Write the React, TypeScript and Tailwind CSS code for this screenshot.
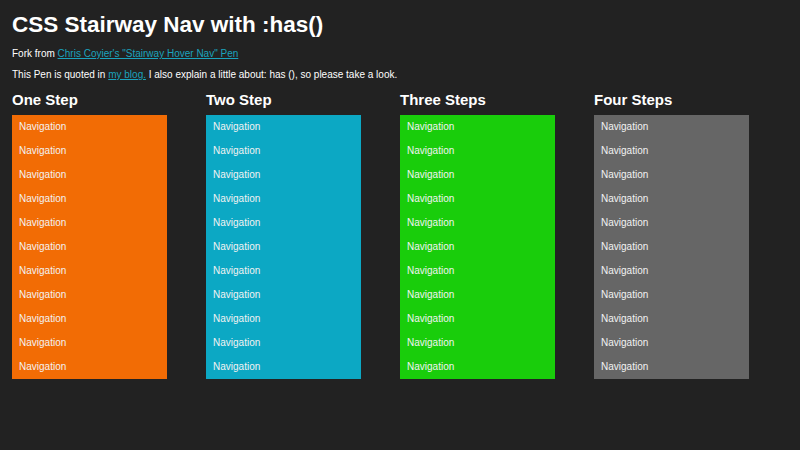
const columns = [
  { title: 'One Step', color: 'bg-[#f26c05]' },
  { title: 'Two Step', color: 'bg-[#0ca8c4]' },
  { title: 'Three Steps', color: 'bg-[#19cd0b]' },
  { title: 'Four Steps', color: 'bg-[#666666]' },
];

const items = Array.from({ length: 11 }, (_, i) => i);

export default function App() {
  return (
    <div className="min-h-[450px] w-full bg-[#222222] px-3 pt-3 text-white font-['Liberation_Sans',Arial,sans-serif]">
      <h1 className="text-[22.5px] font-bold leading-[26px]">CSS Stairway Nav with :has()</h1>
      <p className="mt-[9px] text-[10px] leading-[14px]">
        Fork from{' '}
        <a href="#" className="text-[#1ba3bd] underline">
          Chris Coyier's "Stairway Hover Nav" Pen
        </a>
      </p>
      <p className="mt-[7px] text-[10px] leading-[14px]">
        This Pen is quoted in{' '}
        <a href="#" className="text-[#1ba3bd] underline">
          my blog.
        </a>{' '}
        I also explain a little about: has (), so please take a look.
      </p>
      <div className="mt-[9px] flex gap-[39px]">
        {columns.map((col) => (
          <div key={col.title} className="w-[155px]">
            <h2 className="text-[15px] font-bold leading-[18px]">{col.title}</h2>
            <ul className={`mt-[6px] ${col.color}`}>
              {items.map((i) => (
                <li key={i} className="h-6 pl-[7px] text-[10px] leading-6 text-[#f2f2f2]">
                  Navigation
                </li>
              ))}
            </ul>
          </div>
        ))}
      </div>
    </div>
  );
}
